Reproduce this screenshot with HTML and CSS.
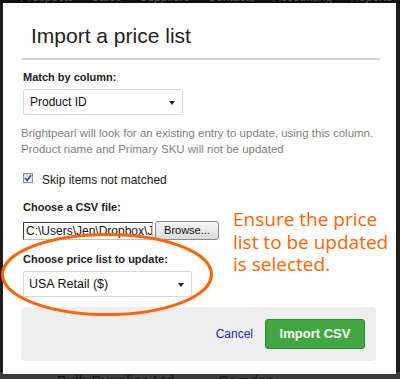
FILE: index.html
```html
<!DOCTYPE html>
<html>
<head>
<meta charset="utf-8">
<link rel="stylesheet" href="styles.css">
</head>
<body>
<div class="backdrop">
  <div class="nav"><span>Prospects</span><span>Sales</span><span>Suppliers</span><span>Contacts</span><span>Accounting</span><span>Reports</span></div>
  <div class="row"><span class="c1">Bulb Supplies Ltd</span><span class="c2">Camden</span></div>
</div>
<div class="modal">
  <h1 class="title">Import a price list</h1>
  <div class="rule"></div>
  <div class="content">
    <div class="label">Match by column:</div>
    <div class="select select-col"><span>Product ID</span><span class="arrow"></span></div>
    <p class="desc">Brightpearl will look for an existing entry to update, using this column.<br>Product name and Primary SKU will not be updated</p>
    <div class="check"><span class="box"><svg width="8" height="8" viewBox="0 0 8 8"><path d="M1 4 L3.2 6.4 L7 1.2" fill="none" stroke="#2b4fa8" stroke-width="1.6"/></svg></span><span>Skip items not matched</span></div>
    <div class="label label-gap">Choose a CSV file:</div>
    <div class="file"><span class="file-text">C:\Users\Jen\Dropbox\JEN\Prices.csv</span><span class="browse">Browse...</span></div>
    <div class="label label-gap">Choose price list to update:</div>
    <div class="select select-list"><span>USA Retail ($)</span><span class="arrow"></span></div>
    <div class="footer"><a class="cancel">Cancel</a><span class="import">Import CSV</span></div>
  </div>
</div>
<div class="note">Ensure the price<br>list to be updated<br>is selected.</div>
<svg class="ring" width="400" height="379" viewBox="0 0 400 379"><ellipse cx="107" cy="274.5" rx="104.5" ry="40" fill="none" stroke="#ff6500" stroke-width="3"/></svg>
</body>
</html>
```
FILE: styles.css
```css
body {
  margin: 0;
  width: 400px;
  height: 379px;
  overflow: hidden;
  position: relative;
  background: #1d1d1d;
  font-family: "Liberation Sans", Arial, sans-serif;
}
.backdrop {
  height: 379px;
  display: flex;
  flex-direction: column;
}
.nav {
  margin-top: -10px;
  height: 14px;
  display: flex;
  gap: 18px;
  padding-left: 20px;
  font-size: 12px;
  line-height: 14px;
  color: #555;
  background: #101010;
  overflow: hidden;
  white-space: nowrap;
}
.row {
  margin-top: auto;
  height: 7px;
  overflow: hidden;
  background: #3a3a3a;
  font-size: 15px;
  line-height: 18px;
  color: #111;
  white-space: nowrap;
}
.row .c1 { margin-left: 57px; }
.row .c2 { margin-left: 44px; }
.modal {
  position: absolute;
  left: 3px;
  top: 3px;
  width: 393px;
  height: 371px;
  background: #fff;
}
.title {
  margin: 0;
  padding: 21px 0 0 28px;
  font-weight: normal;
  font-size: 21px;
  line-height: 24px;
  color: #1e1e1e;
}
.rule {
  height: 2px;
  background: #d3d3d3;
  margin: 10px 16px 0 18px;
}
.content {
  padding: 0 20px 0 18px;
}
.label {
  margin: 10px 0 0 2px;
  font-weight: bold;
  font-size: 11px;
  line-height: 14px;
  color: #222;
}
.label-gap { margin-top: 12px; }
.select {
  margin: 5px 0 0 2px;
  height: 26px;
  box-sizing: border-box;
  border: 1px solid #d9d9d9;
  border-radius: 2px;
  display: flex;
  align-items: center;
  justify-content: space-between;
  padding: 0 7px 0 6px;
  font-size: 12px;
  line-height: 14px;
  color: #111;
}
.select-col { width: 160px; }
.select-list { width: 169px; font-size: 12.5px; padding-left: 5px; }
.arrow {
  width: 0;
  height: 0;
  border-left: 3.5px solid transparent;
  border-right: 3.5px solid transparent;
  border-top: 4px solid #222;
  margin-top: 2px;
}
.desc {
  margin: 10px 0 0;
  font-size: 11.5px;
  line-height: 16px;
  color: #808080;
  white-space: nowrap;
}
.check {
  display: flex;
  align-items: flex-start;
  margin: 15.5px 0 0 2px;
  font-size: 12px;
  line-height: 15px;
  color: #222;
}
.box {
  width: 10px;
  height: 10px;
  box-sizing: border-box;
  border: 1px solid #8e8f8f;
  background: linear-gradient(#d8d8d8, #f4f4f4);
  margin-right: 9px;
  display: flex;
  align-items: center;
  justify-content: center;
}
.file {
  margin: 7px 0 0 2px;
  display: flex;
  align-items: flex-start;
  gap: 2px;
}
.file-text {
  width: 130px;
  height: 18px;
  box-sizing: border-box;
  margin-top: 1px;
  border: 1px solid;
  border-color: #3c3c3c #c0c0c0 #c0c0c0 #3c3c3c;
  overflow: hidden;
  white-space: nowrap;
  font-size: 12px;
  line-height: 16px;
  padding-left: 2px;
  color: #111;
}
.browse {
  width: 64px;
  height: 19px;
  box-sizing: border-box;
  border: 1px solid #8a8a8a;
  border-radius: 3px;
  background: linear-gradient(#f6f6f6, #dadada);
  font-size: 11px;
  line-height: 17px;
  text-align: center;
  color: #111;
}
.footer {
  margin-top: 10px;
  height: 54px;
  background: #eeeeee;
  border-radius: 4px;
  display: flex;
  align-items: center;
  justify-content: flex-end;
  padding-right: 11px;
  gap: 12px;
}
.cancel {
  color: #2424d6;
  font-size: 12px;
  line-height: 14px;
}
.import {
  width: 100px;
  height: 30px;
  box-sizing: border-box;
  background: #42a740;
  border: 1px solid #2f8b2d;
  border-radius: 3px;
  color: #fff;
  font-weight: bold;
  font-size: 13px;
  line-height: 28px;
  text-align: center;
}
.note {
  position: absolute;
  left: 233px;
  top: 208px;
  font-family: "Open Sans", sans-serif;
  font-size: 19px;
  line-height: 22.5px;
  color: #ff6500;
  white-space: nowrap;
}
.ring {
  position: absolute;
  left: 0;
  top: 0;
  pointer-events: none;
}
```
